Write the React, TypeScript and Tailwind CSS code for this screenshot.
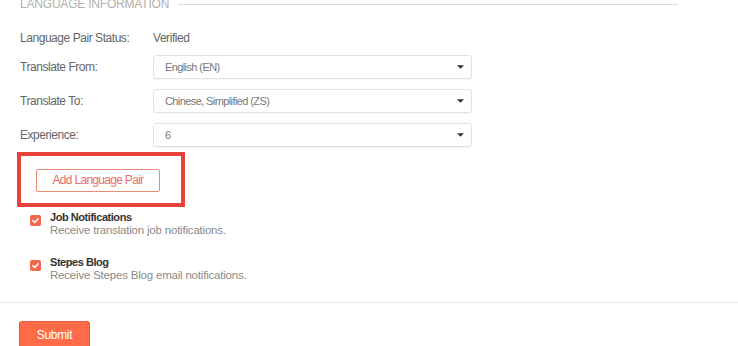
const selects = [
  { label: 'Translate From:', value: 'English (EN)' },
  { label: 'Translate To:', value: 'Chinese, Simplified (ZS)' },
  { label: 'Experience:', value: '6' },
];

const prefs = [
  { title: 'Job Notifications', text: 'Receive translation job notifications.' },
  { title: 'Stepes Blog', text: 'Receive Stepes Blog email notifications.' },
];

const Check = () => (
  <span className="mt-[3px] flex h-[11px] w-[11px] shrink-0 items-center justify-center rounded-[2px] bg-[#f1684c]">
    <svg viewBox="0 0 12 12" className="h-[9px] w-[9px]" fill="none">
      <path d="M2.5 6.2 5 8.6 9.6 3.6" stroke="white" strokeWidth="2" strokeLinecap="round" strokeLinejoin="round" />
    </svg>
  </span>
);

export default function App() {
  return (
    <div className="h-[346px] w-[738px] overflow-hidden bg-white font-['Liberation_Sans',Arial,sans-serif]">
      <div className="-mt-[6px] flex items-center pl-5 pr-[60px]">
        <span className="text-[12px] leading-[20px] tracking-[-0.2px] text-[#b0b0b0]">LANGUAGE INFORMATION</span>
        <div className="ml-[9px] h-px flex-1 bg-[#dcdcdc]" />
      </div>

      <div className="mt-[17px] flex items-center pl-5 text-[12px] leading-[14px] tracking-[-0.45px] text-[#666]">
        <span className="w-[133px]">Language Pair Status:</span>
        <span>Verified</span>
      </div>

      <div className="mt-[10px] flex flex-col gap-[10px] pl-5">
        {selects.map(s => (
          <div key={s.label} className="flex items-center text-[12px] tracking-[-0.45px] text-[#666]">
            <span className="w-[133px]">{s.label}</span>
            <div className="flex h-[24px] w-[319px] items-center justify-between rounded-[3px] border border-[#e3e3e3] pl-[11px] pr-[7px] shadow-[0_1px_1px_rgba(0,0,0,0.04)]">
              <span className="text-[11px] tracking-[-0.6px] text-[#777]">{s.value}</span>
              <svg viewBox="0 0 8 4" className="h-[4px] w-[7px]">
                <path d="M0 0h8L4 4z" fill="#333" />
              </svg>
            </div>
          </div>
        ))}
      </div>

      <div className="ml-[17px] mt-[5px] w-[168px] border-[4px] border-[#e8433a] pb-[11px] pl-[15px] pt-[11px]">
        <button className="h-[23px] w-[124px] rounded-[2px] border border-[#ee8a78] text-[12px] tracking-[-0.7px] text-[#ea6c6c]">
          Add Language Pair
        </button>
      </div>

      <div className="mt-[5px] flex flex-col gap-[20px] pl-[30px]">
        {prefs.map(p => (
          <div key={p.title} className="flex gap-[9px]">
            <Check />
            <div className="-mt-px flex flex-col">
              <span className="text-[11px] font-bold leading-[12px] tracking-[-0.45px] text-[#333]">{p.title}</span>
              <span className="text-[11.5px] leading-[14px] tracking-[-0.2px] text-[#8a8a8a]">{p.text}</span>
            </div>
          </div>
        ))}
      </div>

      <div className="mt-[20px] h-px w-full bg-[#e8e8e8]" />

      <div className="pl-5 pt-[19px]">
        <button className="h-[25px] w-[69px] rounded-[2px] bg-[#fe6b48] text-[12px] tracking-[-0.3px] text-white shadow-[0_0_0_1px_#e95a3a]">
          Submit
        </button>
      </div>
    </div>
  );
}
